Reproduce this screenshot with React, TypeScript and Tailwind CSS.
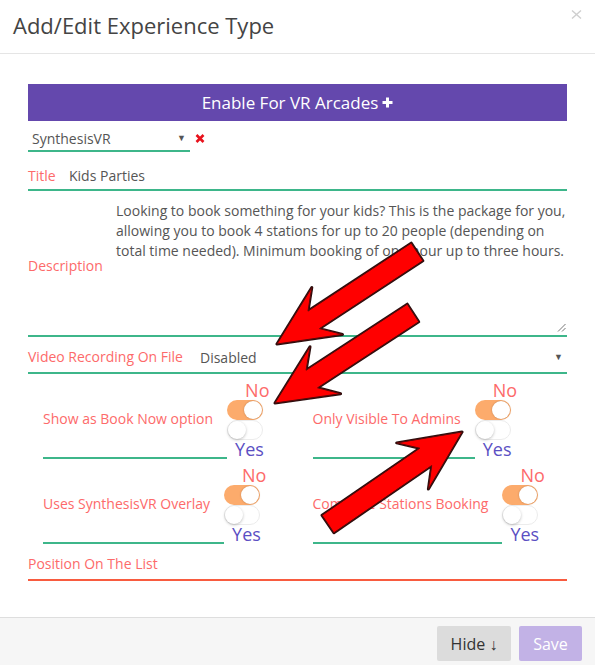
import React from "react";

const GREEN = "border-[#3db68a]";

type Pt = [number, number];

// build a block-arrow outline from tail to tip
function arrowPoints(tail: Pt, tip: Pt): string {
  const shaftW = 21;
  const headW = 56;
  const headLen = 60;
  const neckLen = 44;
  const dx = tip[0] - tail[0];
  const dy = tip[1] - tail[1];
  const len = Math.hypot(dx, dy);
  const ux = dx / len;
  const uy = dy / len;
  const px = -uy;
  const py = ux;
  const at = (base: Pt, back: number, side: number): Pt => [
    base[0] - ux * back + px * side,
    base[1] - uy * back + py * side,
  ];
  const pts: Pt[] = [
    [tail[0] + px * (shaftW / 2), tail[1] + py * (shaftW / 2)],
    at(tip, neckLen, shaftW / 2),
    at(tip, headLen, headW / 2),
    tip,
    at(tip, headLen, -headW / 2),
    at(tip, neckLen, -shaftW / 2),
    [tail[0] - px * (shaftW / 2), tail[1] - py * (shaftW / 2)],
  ];
  return pts.map((p) => `${p[0].toFixed(1)},${p[1].toFixed(1)}`).join(" ");
}

const ARROWS: { tail: Pt; tip: Pt }[] = [
  { tail: [417, 252], tip: [277, 344] },
  { tail: [413, 313], tip: [275, 403] },
  { tail: [328, 524], tip: [462, 432] },
];

function Toggle({ on }: { on: boolean }) {
  return on ? (
    <div className="w-[36px] h-[20px] rounded-full bg-[#fcab6c] flex items-center justify-end pr-[1px]">
      <div className="w-[18px] h-[18px] rounded-full bg-white shadow-[0_0_2px_rgba(0,0,0,0.25)]" />
    </div>
  ) : (
    <div className="w-[36px] h-[20px] rounded-full bg-white border border-[#ececec] flex items-center">
      <div className="w-[18px] h-[18px] rounded-full bg-white shadow-[0_1px_3px_rgba(0,0,0,0.25)]" />
    </div>
  );
}

function SwitchField({ label }: { label: string }) {
  return (
    <div className="flex items-stretch">
      <div className={`flex items-center pr-[14px] border-b-2 ${GREEN} text-[14px] text-[#fd6a6a] whitespace-nowrap`}>
        {label}
      </div>
      <div className="flex flex-col items-start">
        <span className="pl-[18px] text-[18px] leading-[20px] text-[#fd6a6a]">No</span>
        <Toggle on />
        <Toggle on={false} />
        <span className="pl-[8px] text-[18px] leading-[19px] text-[#5b4fc3]">Yes</span>
      </div>
    </div>
  );
}

export default function App() {
  return (
    <div className="relative w-[595px] h-[665px] bg-white flex flex-col overflow-hidden font-['Open_Sans',sans-serif] text-[#555]">
      {/* Header */}
      <div className="h-[54px] shrink-0 border-b border-[#e5e5e5] flex justify-between items-start pl-[13px] pr-[13px]">
        <h4 className="pt-[10px] text-[22px] leading-[30px] text-[#444]">Add/Edit Experience Type</h4>
        <svg width="11" height="9" viewBox="0 0 11 9" className="mt-[10px]">
          <path d="M1 0.5 L10 8.5 M10 0.5 L1 8.5" stroke="#cfcfcf" strokeWidth="1.4" />
        </svg>
      </div>

      {/* Body */}
      <div className="flex-1 px-[28px] pt-[30px]">
        <button className="w-full h-[37px] bg-[#6448ad] text-white text-[17px] flex items-center justify-center gap-[4px]">
          Enable For VR Arcades
          <svg width="11" height="11" viewBox="0 0 11 11">
            <path d="M5.5 0.5 V10.5 M0.5 5.5 H10.5" stroke="white" strokeWidth="3" />
          </svg>
        </button>

        <div className="flex items-center gap-[5px]">
          <div className={`w-[162px] h-[31px] border-b-2 ${GREEN} flex items-center justify-between pl-[4px] pr-[4px] pt-[5px] text-[14px]`}>
            <span>SynthesisVR</span>
            <span className="text-[9px] text-[#555]">▼</span>
          </div>
          <svg width="10" height="9" viewBox="0 0 10 9" className="mt-[4px]">
            <path d="M1.5 1 L8.5 8 M8.5 1 L1.5 8" stroke="#e8121c" strokeWidth="2.6" />
          </svg>
        </div>

        <div className={`h-[39px] border-b-2 ${GREEN} flex items-center pt-[9px] text-[14px]`}>
          <span className="w-[41px] text-[#fd6a6a]">Title</span>
          <span>Kids Parties</span>
        </div>

        <div className={`relative h-[146px] border-b-2 ${GREEN} flex items-center text-[14px]`}>
          <span className="w-[88px] pt-[4px] text-[#fd6a6a]">Description</span>
          <p className="self-start pt-[10px] leading-[20px] whitespace-nowrap">
            Looking to book something for your kids? This is the package for you,
            <br />
            allowing you to book 4 stations for up to 20 people (depending on
            <br />
            total time needed). Minimum booking of one hour up to three hours.
          </p>
          <svg width="9" height="9" viewBox="0 0 9 9" className="absolute right-[1px] bottom-[3px]">
            <path d="M8.5 1 L1 8.5 M8.5 5 L5 8.5" stroke="#777" strokeWidth="1" />
          </svg>
        </div>

        <div className={`h-[37px] border-b-2 ${GREEN} flex items-center pt-[4px] text-[14px]`}>
          <span className="w-[172px] text-[#fd6a6a]">Video Recording On File</span>
          <span className="flex-1 pt-[2px]">Disabled</span>
          <span className="text-[9px] pr-[4px]">▼</span>
        </div>

        <div className="grid grid-cols-2 pt-[6px] gap-y-[6px]">
          <div className="px-[15px]">
            <SwitchField label="Show as Book Now option" />
          </div>
          <div className="px-[15px]">
            <SwitchField label="Only Visible To Admins" />
          </div>
          <div className="px-[15px]">
            <SwitchField label="Uses SynthesisVR Overlay" />
          </div>
          <div className="px-[15px]">
            <SwitchField label="Complete Stations Booking" />
          </div>
        </div>

        <div className="h-[37px] border-b-2 border-[#f85b3f] flex items-center pt-[4px] text-[14px] text-[#fd6a6a]">
          Position On The List
        </div>
      </div>

      {/* Footer */}
      <div className="h-[48px] shrink-0 border-t border-[#dedede] bg-[#f6f6f6] flex justify-end items-start gap-[8px] pt-[8px] pr-[13px]">
        <button className="w-[74px] h-[35px] rounded-[2px] bg-[#dcdcdc] text-[#333] text-[16px]">Hide ↓</button>
        <button className="w-[63px] h-[35px] rounded-[2px] bg-[#c2b2e6] text-white text-[16px]">Save</button>
      </div>

      {/* Annotation arrows */}
      <svg className="absolute inset-0 pointer-events-none" width="595" height="665" viewBox="0 0 595 665">
        <defs>
          <filter id="soft" x="-10%" y="-10%" width="120%" height="120%">
            <feGaussianBlur stdDeviation="0.7" />
          </filter>
        </defs>
        {ARROWS.map((a, i) => (
          <g key={i}>
            <polygon points={arrowPoints(a.tail, a.tip)} fill="none" stroke="#2a1010" strokeWidth="3" strokeLinejoin="round" filter="url(#soft)" />
            <polygon points={arrowPoints(a.tail, a.tip)} fill="#ff0000" stroke="#5a0a0a" strokeWidth="1" strokeLinejoin="round" />
          </g>
        ))}
      </svg>
    </div>
  );
}
